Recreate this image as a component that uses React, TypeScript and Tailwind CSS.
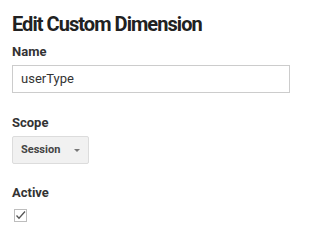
export default function App() {
  return (
    <div className="w-[298px] h-[234px] bg-white pl-[12px] pt-[12px]" style={{ fontFamily: 'Roboto, "Liberation Sans", sans-serif' }}>
      <div className="text-[20px] leading-[24px] font-bold tracking-[-0.95px] text-[#212121] whitespace-nowrap">Edit Custom Dimension</div>
      <div className="mt-[8px] text-[13px] leading-[16px] font-bold text-[#333333]">Name</div>
      <div className="mt-[5px] w-[278px] h-[28px] border border-[#cccccc] flex items-center pl-[8px] text-[13px] text-[#333333]">userType</div>
      <div className="mt-[22px] text-[13px] leading-[16px] font-bold text-[#333333]">Scope</div>
      <div className="mt-[5px] w-[77px] h-[28px] border border-[#dcdcdc] bg-[#f1f1f1] rounded-[2px] flex items-center pl-[8px] pr-[8px] justify-between">
        <span className="text-[11px] font-bold text-[#444444]">Session</span>
        <svg width="6" height="3" viewBox="0 0 6 3" className="mt-[1px]">
          <path d="M0 0 L6 0 L3 3 Z" fill="#777777" />
        </svg>
      </div>
      <div className="mt-[21px] text-[13px] leading-[16px] font-bold text-[#333333]">Active</div>
      <div className="mt-[8px] ml-[2px] w-[13px] h-[13px] border border-[#bdbdbd] relative">
        <svg width="13" height="13" viewBox="0 0 13 13" className="absolute left-[-1px] top-[-1px]">
          <path d="M2.5 6.5 L5 9.2 L11 2.5" fill="none" stroke="#555555" strokeWidth="1.3" />
        </svg>
      </div>
    </div>
  );
}
